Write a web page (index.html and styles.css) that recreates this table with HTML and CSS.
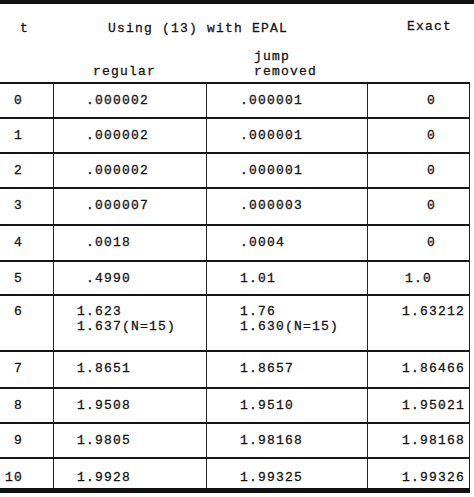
FILE: index.html
```html
<!DOCTYPE html>
<html lang="en">
<head>
<meta charset="utf-8">
<title>Table</title>
<link rel="stylesheet" href="styles.css">
</head>
<body>
<div class="sheet">
  <div class="head">
    <div class="h-t">t</div>
    <div class="h-using">Using (13) with EPAL</div>
    <div class="h-exact">Exact</div>
    <div class="h-reg">regular</div>
    <div class="h-jump">jump<br>removed</div>
  </div>
  <div class="row"><div class="c-t">0</div><div class="c-reg dot">.000002</div><div class="c-jump">.000001</div><div class="c-ex ex-zero">0</div></div>
  <div class="row"><div class="c-t">1</div><div class="c-reg dot">.000002</div><div class="c-jump">.000001</div><div class="c-ex ex-zero">0</div></div>
  <div class="row"><div class="c-t">2</div><div class="c-reg dot">.000002</div><div class="c-jump">.000001</div><div class="c-ex ex-zero">0</div></div>
  <div class="row tall"><div class="c-t">3</div><div class="c-reg dot">.000007</div><div class="c-jump">.000003</div><div class="c-ex ex-zero">0</div></div>
  <div class="row mid"><div class="c-t">4</div><div class="c-reg dot">.0018</div><div class="c-jump">.0004</div><div class="c-ex ex-zero">0</div></div>
  <div class="row short"><div class="c-t">5</div><div class="c-reg dot">.4990</div><div class="c-jump">1.01</div><div class="c-ex ex-one">1.0</div></div>
  <div class="row multi"><div class="c-t">6</div><div class="c-reg">1.623<br>1.637(N=15)</div><div class="c-jump">1.76<br>1.630(N=15)</div><div class="c-ex">1.63212</div></div>
  <div class="row tall"><div class="c-t">7</div><div class="c-reg">1.8651</div><div class="c-jump">1.8657</div><div class="c-ex">1.86466</div></div>
  <div class="row"><div class="c-t">8</div><div class="c-reg">1.9508</div><div class="c-jump">1.9510</div><div class="c-ex">1.95021</div></div>
  <div class="row"><div class="c-t">9</div><div class="c-reg">1.9805</div><div class="c-jump">1.98168</div><div class="c-ex">1.98168</div></div>
  <div class="row last"><div class="c-t">10</div><div class="c-reg">1.9928</div><div class="c-jump">1.99325</div><div class="c-ex">1.99326</div></div>
</div>
</body>
</html>
```
FILE: styles.css
```css
html, body {
  margin: 0;
  padding: 0;
  background: #fff;
}

body {
  font-family: "Liberation Mono", "Courier New", monospace;
  font-size: 13px;
  letter-spacing: 1.2px;
  line-height: 15px;
  color: #151515;
  -webkit-text-stroke: 0.3px #151515;
}

.sheet {
  width: 474px;
  border-top: 4px solid #111;
}

.head {
  width: 470px;
  display: grid;
  grid-template-columns: 53px 153px 161px 103px;
  grid-template-rows: 15px 30px;
  row-gap: 13px;
  padding: 17px 0 3px;
  border-bottom: 2px solid #161616;
}

.h-t {
  grid-column: 1;
  grid-row: 1;
  padding-left: 20px;
}

.h-using {
  grid-column: 2 / span 2;
  grid-row: 1;
  padding-left: 55px;
}

.h-exact {
  grid-column: 4;
  grid-row: 1;
  padding-left: 40px;
  margin-top: -2px;
}

.h-reg {
  grid-column: 2;
  grid-row: 2;
  align-self: end;
  padding-left: 40px;
}

.h-jump {
  grid-column: 3;
  grid-row: 2;
  padding-left: 48px;
}

.row {
  width: 470px;
  display: grid;
  grid-template-columns: 53px 153px 161px 103px;
  border-bottom: 2px solid #161616;
}

.row > div {
  box-sizing: border-box;
  padding-top: 9px;
  padding-bottom: 9px;
  white-space: nowrap;
}

.row.tall > div { padding-bottom: 11px; }
.row.mid > div { padding-bottom: 10px; }
.row.short > div { padding-bottom: 8px; }

.row.multi > div {
  padding-top: 8px;
  padding-bottom: 16px;
}

.row.last {
  border-bottom: 5px solid #111;
}

.row.last > div {
  padding-top: 11px;
  padding-bottom: 3px;
}

.row .c-t {
  text-align: right;
  padding-right: 30px;
}

.row .c-reg {
  border-left: 1.5px solid #222;
  padding-left: 23px;
}

.row .c-reg.dot {
  padding-left: 32px;
}

.row .c-jump {
  border-left: 1.5px solid #222;
  padding-left: 33px;
}

.row .c-ex {
  border-left: 1.5px solid #222;
  border-right: 1.5px solid #222;
  text-align: right;
  padding-right: 4px;
}

.row .c-ex.ex-zero {
  padding-right: 33px;
}

.row .c-ex.ex-one {
  padding-right: 37px;
}
```
